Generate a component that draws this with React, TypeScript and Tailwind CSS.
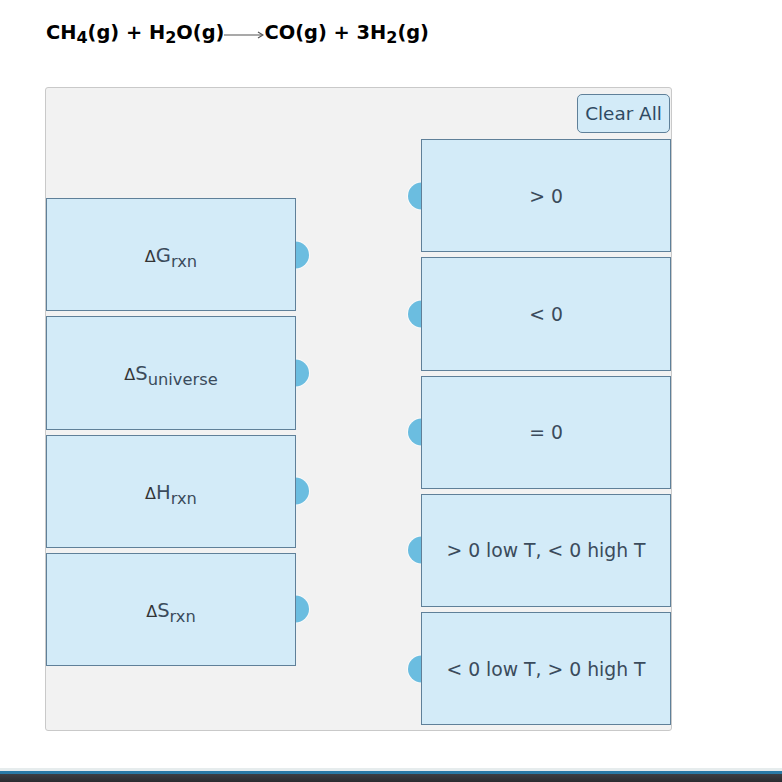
import React from "react";

const font = { fontFamily: '"DejaVu Sans", Verdana, sans-serif' };

function Dot({ side }: { side: "left" | "right" }) {
  return (
    <div
      className={
        "absolute top-1/2 -translate-y-1/2 w-[27px] h-[27px] rounded-full bg-[#6bbde0] shadow-[0_0_0_1px_rgba(255,255,255,0.6)] " +
        (side === "right" ? "right-[-13px]" : "left-[-13px]")
      }
    />
  );
}

function Box({ children, side }: { children: React.ReactNode; side: "left" | "right" }) {
  return (
    <div className="relative h-[113.25px] w-[250px]">
      <Dot side={side} />
      <div className="relative z-10 h-full w-full bg-[#d3ebf8] border border-[#5f8099] flex items-center justify-center text-[18.8px] text-[#3b4b5c] pt-[2px]">
        {children}
      </div>
    </div>
  );
}

function Delta({ main, sub }: { main: string; sub: string }) {
  return (
    <span className="inline-flex items-baseline">
      <span className="text-[16px] text-[#333]">Δ</span>
      <span className="text-[19.5px]">{main}</span>
      <span className="text-[16.3px] relative top-[5px]">{sub}</span>
    </span>
  );
}

export default function App() {
  return (
    <div className="h-[782px] w-[782px] bg-white flex flex-col overflow-hidden" style={font}>
      <div className="pl-[46px] pt-[19px] h-[87px] text-[19.4px] font-bold text-black flex items-start leading-[28px]">
        <span>
          CH<span className="text-[16px] relative top-[4px]">4</span>(g) + H<span className="text-[16px] relative top-[4px]">2</span>O(g)
        </span>
        <svg width="40" height="28" viewBox="0 0 40 28" className="shrink-0">
          <line x1="0" y1="16" x2="38" y2="16" stroke="#555" strokeWidth="1.2" />
          <path d="M34 13 L39 16 L34 19" fill="none" stroke="#555" strokeWidth="1.2" />
        </svg>
        <span>
          CO(g) + 3H<span className="text-[16px] relative top-[4px]">2</span>(g)
        </span>
      </div>
      <div className="ml-[45px] w-[627px] h-[644px] bg-[#f2f2f2] border border-[#c9c9c9] rounded-[3px] flex justify-between">
        <div className="pt-[110px] flex flex-col gap-[5px]">
          <Box side="right"><Delta main="G" sub="rxn" /></Box>
          <Box side="right"><Delta main="S" sub="universe" /></Box>
          <Box side="right"><Delta main="H" sub="rxn" /></Box>
          <Box side="right"><Delta main="S" sub="rxn" /></Box>
        </div>
        <div className="flex flex-col items-end">
          <button className="mt-[6px] mr-[1px] w-[93px] h-[39px] bg-[#d3ebf8] border border-[#5f8099] rounded-[5px] text-[18.4px] text-[#2f4a63] whitespace-nowrap">
            Clear All
          </button>
          <div className="mt-[6px] flex flex-col gap-[5px]">
            <Box side="left">&gt; 0</Box>
            <Box side="left">&lt; 0</Box>
            <Box side="left">= 0</Box>
            <Box side="left">&gt; 0 low T, &lt; 0 high T</Box>
            <Box side="left">&lt; 0 low T, &gt; 0 high T</Box>
          </div>
        </div>
      </div>
      <div className="mt-auto">
        <div className="h-[3px] bg-[#e6eced]" />
        <div className="h-[3px] bg-[#2a7aa6]" />
        <div className="h-[8px] bg-gradient-to-b from-[#3c3f44] to-[#2a2c30]" />
      </div>
    </div>
  );
}
